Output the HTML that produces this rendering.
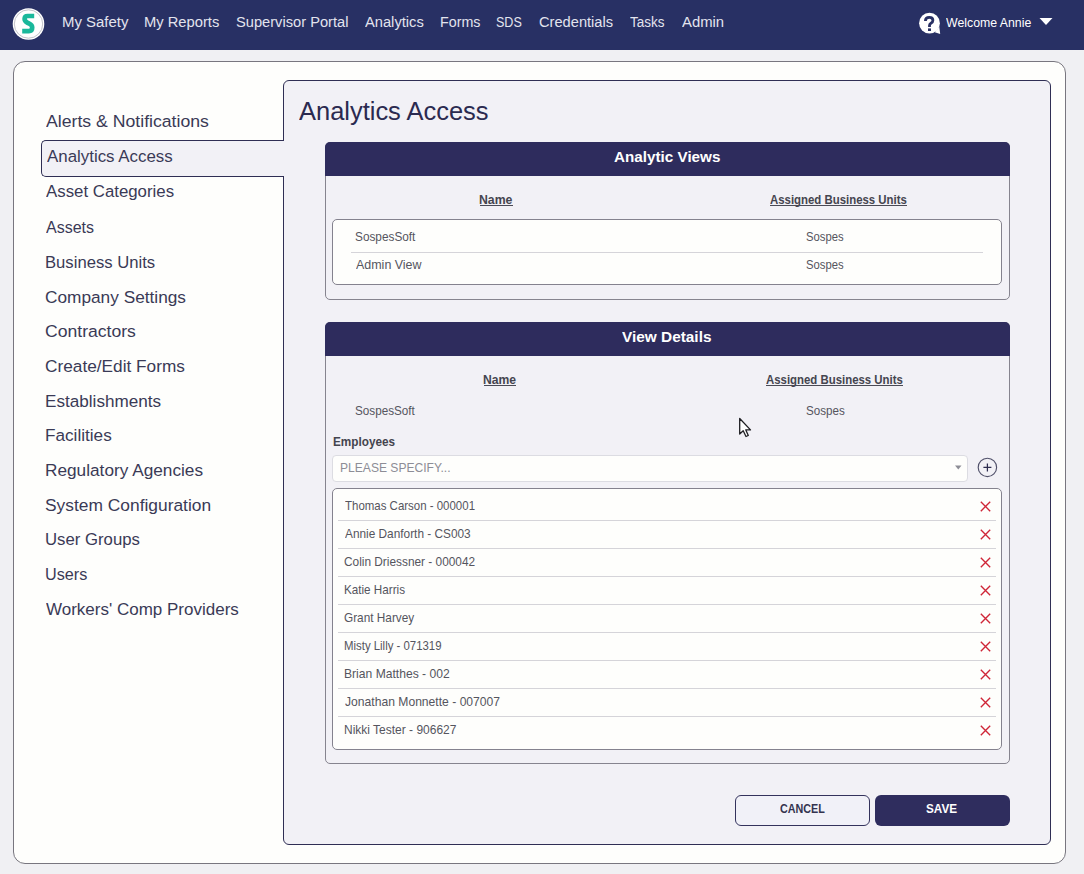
<!DOCTYPE html>
<html><head><meta charset="utf-8"><style>
*{box-sizing:border-box;margin:0;padding:0}
html,body{width:1084px;height:874px;overflow:hidden;background:#f0f0f3;font-family:"Liberation Sans",sans-serif;position:relative}
.t{position:absolute;white-space:nowrap;transform-origin:0 0}
.abs{position:absolute}
#nav{left:0;top:0;width:1084px;height:50px;background:#283064}
#card{left:13px;top:61px;width:1053px;height:803px;background:#fefefc;border:1px solid #78767f;border-radius:12px}
#panel{left:283px;top:80px;width:768px;height:765px;background:#f2f1f6;border:1px solid #2f2e54;border-radius:6px 6px 6px 6px}
#tab{left:41px;top:140px;width:243px;height:37px;background:#f2f1f6;border:1px solid #2f2e54;border-right:none;border-radius:5px 0 0 5px}
.box{position:absolute;border:1px solid #86848f;border-radius:5px;background:#f2f1f6}
.hdr{position:absolute;left:-1px;top:-1px;right:-1px;height:34px;background:#2e2c5d;border-radius:5px 5px 0 0}
.list{position:absolute;border:1px solid #84828e;border-radius:5px;background:#fefefc}
.sep{position:absolute;left:338px;width:658px;height:1px;background:#d5d4d9}
.x{position:absolute;left:980px}
</style></head><body>
<div id="nav" class="abs"></div>
<svg class="abs" style="left:10px;top:5px" width="38" height="38" viewBox="0 0 38 38">
<circle cx="18.5" cy="19" r="15.8" fill="#ffffff"/>
<circle cx="18.5" cy="19" r="14.2" fill="none" stroke="#a8a8b2" stroke-width="0.7"/>
<path d="M24.2 11 H17.6 C15.4 11 14.6 12.3 14.6 14 C14.6 15.8 15.7 16.8 17.6 17.8 L19.3 18.7 C21.3 19.7 22.2 20.8 22.2 22.6 C22.2 24.9 21.1 26.2 18.8 26.2 H12.2" fill="none" stroke="#1ab89b" stroke-width="4.7"/>
</svg>
<div class="t" style="left:62.00px;top:14.00px;font-size:15.25px;line-height:15.25px;font-weight:normal;color:#e3e4ee;transform:scaleX(0.9795);">My Safety</div><div class="t" style="left:144.00px;top:14.00px;font-size:15.25px;line-height:15.25px;font-weight:normal;color:#e3e4ee;transform:scaleX(0.9658);">My Reports</div><div class="t" style="left:236.00px;top:14.00px;font-size:15.25px;line-height:15.25px;font-weight:normal;color:#e3e4ee;transform:scaleX(0.9612);">Supervisor Portal</div><div class="t" style="left:365.00px;top:14.00px;font-size:15.25px;line-height:15.25px;font-weight:normal;color:#e3e4ee;transform:scaleX(0.9626);">Analytics</div><div class="t" style="left:440.00px;top:14.00px;font-size:15.25px;line-height:15.25px;font-weight:normal;color:#e3e4ee;transform:scaleX(0.9352);">Forms</div><div class="t" style="left:496.00px;top:14.00px;font-size:15.25px;line-height:15.25px;font-weight:normal;color:#e3e4ee;transform:scaleX(0.8210);">SDS</div><div class="t" style="left:539.00px;top:14.00px;font-size:15.25px;line-height:15.25px;font-weight:normal;color:#e3e4ee;transform:scaleX(0.9604);">Credentials</div><div class="t" style="left:630.00px;top:14.00px;font-size:15.25px;line-height:15.25px;font-weight:normal;color:#e3e4ee;transform:scaleX(0.8824);">Tasks</div><div class="t" style="left:682.00px;top:14.00px;font-size:15.25px;line-height:15.25px;font-weight:normal;color:#e3e4ee;transform:scaleX(0.9742);">Admin</div><div class="t" style="left:946.00px;top:16.00px;font-size:13.25px;line-height:13.25px;font-weight:normal;color:#ffffff;transform:scaleX(0.9290);">Welcome Annie</div>
<svg class="abs" style="left:912px;top:8px" width="34" height="34" viewBox="0 0 34 34">
<circle cx="17.5" cy="15.2" r="10.4" fill="#fff"/><path d="M22.7 24.2 L28.2 26 L27.3 18.8 Z" fill="#fff"/>
<path d="M13.4 13 Q13.4 9.4 17.3 9.4 Q20.9 9.4 20.9 12.3 Q20.9 14.3 18.9 15.3 Q17.5 16 17.5 17.5 V19" fill="none" stroke="#283064" stroke-width="2.8"/>
<rect x="16" y="20.4" width="3" height="2.6" fill="#283064"/>
</svg>
<svg class="abs" style="left:1039px;top:17px" width="14" height="9" viewBox="0 0 14 9"><path d="M0.5 1 L13.5 1 L7 8 Z" fill="#fff"/></svg>
<div id="card" class="abs"></div>
<div id="panel" class="abs"></div>
<div id="tab" class="abs"></div>
<div class="t" style="left:46.00px;top:114.00px;font-size:16.75px;line-height:16.75px;font-weight:normal;color:#3a3a56;transform:scaleX(1.0543);">Alerts &amp; Notifications</div><div class="t" style="left:47.00px;top:149.00px;font-size:16.75px;line-height:16.75px;font-weight:normal;color:#3a3a56;transform:scaleX(1.0081);">Analytics Access</div><div class="t" style="left:46.00px;top:184.00px;font-size:16.75px;line-height:16.75px;font-weight:normal;color:#3a3a56;transform:scaleX(1.0041);">Asset Categories</div><div class="t" style="left:46.00px;top:220.00px;font-size:16.75px;line-height:16.75px;font-weight:normal;color:#3a3a56;transform:scaleX(0.9549);">Assets</div><div class="t" style="left:45.00px;top:255.00px;font-size:16.75px;line-height:16.75px;font-weight:normal;color:#3a3a56;transform:scaleX(0.9937);">Business Units</div><div class="t" style="left:45.00px;top:290.00px;font-size:16.75px;line-height:16.75px;font-weight:normal;color:#3a3a56;transform:scaleX(1.0300);">Company Settings</div><div class="t" style="left:45.00px;top:324.00px;font-size:16.75px;line-height:16.75px;font-weight:normal;color:#3a3a56;transform:scaleX(1.0500);">Contractors</div><div class="t" style="left:45.00px;top:359.00px;font-size:16.75px;line-height:16.75px;font-weight:normal;color:#3a3a56;transform:scaleX(1.0295);">Create/Edit Forms</div><div class="t" style="left:45.00px;top:394.00px;font-size:16.75px;line-height:16.75px;font-weight:normal;color:#3a3a56;transform:scaleX(1.0224);">Establishments</div><div class="t" style="left:45.00px;top:428.00px;font-size:16.75px;line-height:16.75px;font-weight:normal;color:#3a3a56;transform:scaleX(1.0241);">Facilities</div><div class="t" style="left:45.00px;top:463.00px;font-size:16.75px;line-height:16.75px;font-weight:normal;color:#3a3a56;transform:scaleX(1.0287);">Regulatory Agencies</div><div class="t" style="left:45.00px;top:498.00px;font-size:16.75px;line-height:16.75px;font-weight:normal;color:#3a3a56;transform:scaleX(1.0374);">System Configuration</div><div class="t" style="left:45.00px;top:532.00px;font-size:16.75px;line-height:16.75px;font-weight:normal;color:#3a3a56;transform:scaleX(0.9994);">User Groups</div><div class="t" style="left:45.00px;top:567.00px;font-size:16.75px;line-height:16.75px;font-weight:normal;color:#3a3a56;transform:scaleX(0.9664);">Users</div><div class="t" style="left:46.00px;top:602.00px;font-size:16.75px;line-height:16.75px;font-weight:normal;color:#3a3a56;transform:scaleX(1.0150);">Workers' Comp Providers</div>
<div class="box" style="left:325px;top:142px;width:685px;height:158px"><div class="hdr"></div></div>
<div class="list" style="left:332px;top:219px;width:670px;height:66px"></div>
<div class="abs" style="left:351px;top:252px;width:632px;height:1px;background:#d5d4d9"></div>
<div class="box" style="left:325px;top:322px;width:685px;height:442px"><div class="hdr"></div></div>
<div class="abs" style="left:332px;top:455px;width:636px;height:27px;background:#fefefc;border:1px solid #dcdce2;border-radius:4px"></div>
<svg class="abs" style="left:955px;top:465px" width="7" height="5" viewBox="0 0 7 5"><path d="M0 0.5 L6.5 0.5 L3.25 4.5 Z" fill="#8d8d96"/></svg>
<svg class="abs" style="left:977px;top:457px" width="21" height="21" viewBox="0 0 21 21"><circle cx="10.4" cy="10.4" r="9.2" fill="none" stroke="#50506a" stroke-width="1.15"/><path d="M10.4 6.4V14.4M6.4 10.4H14.4" stroke="#2e2d50" stroke-width="1.25"/></svg>
<div class="list" style="left:332px;top:488px;width:670px;height:262px"></div>
<div class="sep" style="top:520px"></div><div class="sep" style="top:548px"></div><div class="sep" style="top:576px"></div><div class="sep" style="top:604px"></div><div class="sep" style="top:632px"></div><div class="sep" style="top:660px"></div><div class="sep" style="top:688px"></div><div class="sep" style="top:716px"></div><svg class="x" style="top:501px" width="11" height="11" viewBox="0 0 11 11"><path d="M0.8 0.8L10.2 10.2M10.2 0.8L0.8 10.2" stroke="#cf2537" stroke-width="1.35"/></svg><svg class="x" style="top:529px" width="11" height="11" viewBox="0 0 11 11"><path d="M0.8 0.8L10.2 10.2M10.2 0.8L0.8 10.2" stroke="#cf2537" stroke-width="1.35"/></svg><svg class="x" style="top:557px" width="11" height="11" viewBox="0 0 11 11"><path d="M0.8 0.8L10.2 10.2M10.2 0.8L0.8 10.2" stroke="#cf2537" stroke-width="1.35"/></svg><svg class="x" style="top:585px" width="11" height="11" viewBox="0 0 11 11"><path d="M0.8 0.8L10.2 10.2M10.2 0.8L0.8 10.2" stroke="#cf2537" stroke-width="1.35"/></svg><svg class="x" style="top:613px" width="11" height="11" viewBox="0 0 11 11"><path d="M0.8 0.8L10.2 10.2M10.2 0.8L0.8 10.2" stroke="#cf2537" stroke-width="1.35"/></svg><svg class="x" style="top:641px" width="11" height="11" viewBox="0 0 11 11"><path d="M0.8 0.8L10.2 10.2M10.2 0.8L0.8 10.2" stroke="#cf2537" stroke-width="1.35"/></svg><svg class="x" style="top:669px" width="11" height="11" viewBox="0 0 11 11"><path d="M0.8 0.8L10.2 10.2M10.2 0.8L0.8 10.2" stroke="#cf2537" stroke-width="1.35"/></svg><svg class="x" style="top:697px" width="11" height="11" viewBox="0 0 11 11"><path d="M0.8 0.8L10.2 10.2M10.2 0.8L0.8 10.2" stroke="#cf2537" stroke-width="1.35"/></svg><svg class="x" style="top:725px" width="11" height="11" viewBox="0 0 11 11"><path d="M0.8 0.8L10.2 10.2M10.2 0.8L0.8 10.2" stroke="#cf2537" stroke-width="1.35"/></svg>
<div class="t" style="left:299.00px;top:99.00px;font-size:25.25px;line-height:25.25px;font-weight:normal;color:#2b2a50;transform:scaleX(1.0079);">Analytics Access</div><div class="t" style="left:614.00px;top:149.00px;font-size:15.5px;line-height:15.5px;font-weight:bold;color:#ffffff;transform:scaleX(0.9828);">Analytic Views</div><div class="t" style="left:622.00px;top:329.00px;font-size:15.5px;line-height:15.5px;font-weight:bold;color:#ffffff;transform:scaleX(0.9921);">View Details</div><div class="t" style="left:479.00px;top:194.00px;font-size:12.75px;line-height:12.75px;font-weight:bold;color:#45454f;transform:scaleX(0.9627);">Name</div><div class="t" style="left:770.00px;top:194.00px;font-size:12.75px;line-height:12.75px;font-weight:bold;color:#45454f;transform:scaleX(0.8944);">Assigned Business Units</div><div class="t" style="left:483.00px;top:374.00px;font-size:12.75px;line-height:12.75px;font-weight:bold;color:#45454f;transform:scaleX(0.9521);">Name</div><div class="t" style="left:766.00px;top:374.00px;font-size:12.75px;line-height:12.75px;font-weight:bold;color:#45454f;transform:scaleX(0.8944);">Assigned Business Units</div><div class="abs" style="left:480px;top:205px;width:33px;height:1px;background:#4a4a55"></div><div class="abs" style="left:769.5px;top:205px;width:137.0px;height:1px;background:#4a4a55"></div><div class="abs" style="left:483.5px;top:385px;width:32.5px;height:1px;background:#4a4a55"></div><div class="abs" style="left:766px;top:385px;width:137px;height:1px;background:#4a4a55"></div><div class="t" style="left:355.00px;top:230.00px;font-size:13.0px;line-height:13.0px;font-weight:normal;color:#55555e;transform:scaleX(0.9085);">SospesSoft</div><div class="t" style="left:356.00px;top:258.00px;font-size:13.0px;line-height:13.0px;font-weight:normal;color:#55555e;transform:scaleX(0.9581);">Admin View</div><div class="t" style="left:806.00px;top:230.00px;font-size:13.0px;line-height:13.0px;font-weight:normal;color:#55555e;transform:scaleX(0.8667);">Sospes</div><div class="t" style="left:806.00px;top:258.00px;font-size:13.0px;line-height:13.0px;font-weight:normal;color:#55555e;transform:scaleX(0.8667);">Sospes</div><div class="t" style="left:355.00px;top:404.00px;font-size:13.0px;line-height:13.0px;font-weight:normal;color:#55555e;transform:scaleX(0.9005);">SospesSoft</div><div class="t" style="left:806.00px;top:404.00px;font-size:13.0px;line-height:13.0px;font-weight:normal;color:#55555e;transform:scaleX(0.8942);">Sospes</div><div class="t" style="left:333.00px;top:436.00px;font-size:12.75px;line-height:12.75px;font-weight:bold;color:#44444e;transform:scaleX(0.9229);">Employees</div><div class="t" style="left:340.00px;top:461.00px;font-size:13.0px;line-height:13.0px;font-weight:normal;color:#8d8d96;transform:scaleX(0.9292);">PLEASE SPECIFY...</div><div class="t" style="left:345.00px;top:499.00px;font-size:13.0px;line-height:13.0px;font-weight:normal;color:#55555e;transform:scaleX(0.8819);">Thomas Carson - 000001</div><div class="t" style="left:345.00px;top:527.00px;font-size:13.0px;line-height:13.0px;font-weight:normal;color:#55555e;transform:scaleX(0.9106);">Annie Danforth - CS003</div><div class="t" style="left:344.00px;top:555.00px;font-size:13.0px;line-height:13.0px;font-weight:normal;color:#55555e;transform:scaleX(0.9117);">Colin Driessner - 000042</div><div class="t" style="left:344.00px;top:583.00px;font-size:13.0px;line-height:13.0px;font-weight:normal;color:#55555e;transform:scaleX(0.8983);">Katie Harris</div><div class="t" style="left:344.00px;top:611.00px;font-size:13.0px;line-height:13.0px;font-weight:normal;color:#55555e;transform:scaleX(0.9083);">Grant Harvey</div><div class="t" style="left:344.00px;top:639.00px;font-size:13.0px;line-height:13.0px;font-weight:normal;color:#55555e;transform:scaleX(0.8765);">Misty Lilly - 071319</div><div class="t" style="left:344.00px;top:667.00px;font-size:13.0px;line-height:13.0px;font-weight:normal;color:#55555e;transform:scaleX(0.9313);">Brian Matthes - 002</div><div class="t" style="left:345.00px;top:695.00px;font-size:13.0px;line-height:13.0px;font-weight:normal;color:#55555e;transform:scaleX(0.9330);">Jonathan Monnette - 007007</div><div class="t" style="left:344.00px;top:723.00px;font-size:13.0px;line-height:13.0px;font-weight:normal;color:#55555e;transform:scaleX(0.9222);">Nikki Tester - 906627</div>
<div class="abs" style="left:735px;top:795px;width:135px;height:31px;border:1px solid #34335d;border-radius:6px;background:#f1f1f8"></div>
<div class="abs" style="left:875px;top:795px;width:135px;height:31px;border-radius:6px;background:#2f2d5e"></div>
<div class="t" style="left:780.00px;top:802.00px;font-size:13.0px;line-height:13.0px;font-weight:bold;color:#34334f;transform:scaleX(0.8271);">CANCEL</div><div class="t" style="left:926.00px;top:802.00px;font-size:13.0px;line-height:13.0px;font-weight:bold;color:#ffffff;transform:scaleX(0.9016);">SAVE</div>
<svg class="abs" style="left:738px;top:417px" width="14" height="22" viewBox="0 0 14 22"><path d="M1.7 1.5 L1.7 17 L5.2 13.7 L8 19.5 L10.3 18.5 L7.8 12.9 L12.5 12.9 Z" fill="#fff" stroke="#1e1e22" stroke-width="1.3" stroke-linejoin="round"/></svg>
</body></html>
